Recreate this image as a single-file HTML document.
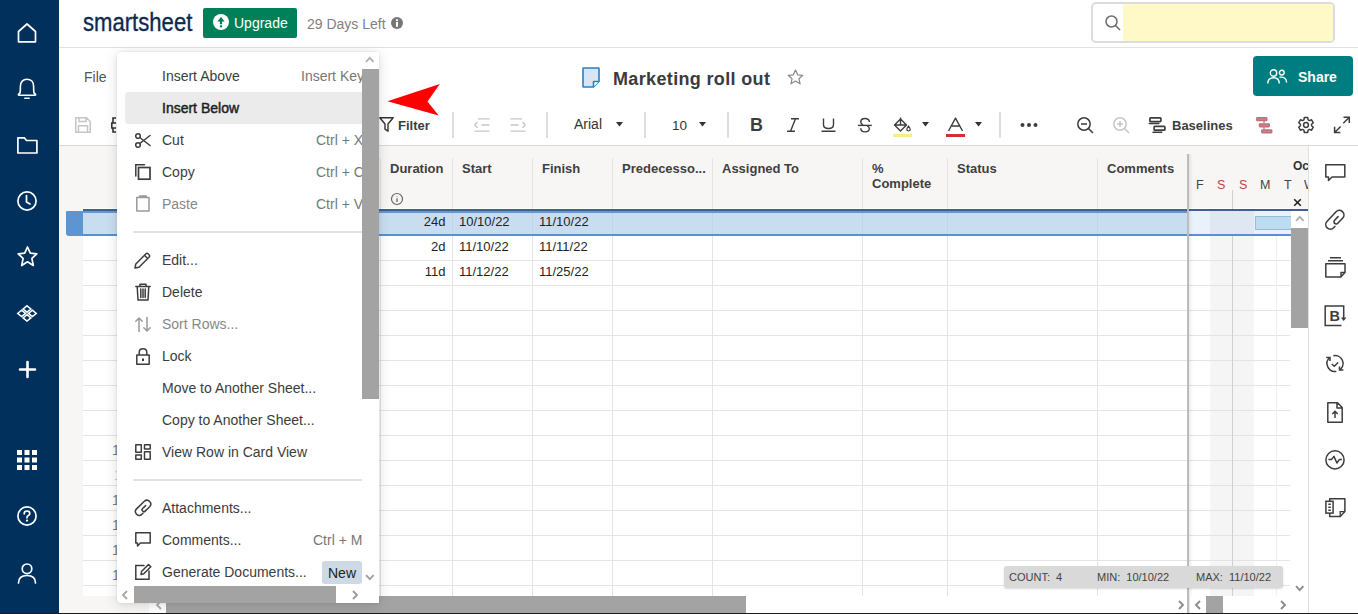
<!DOCTYPE html>
<html><head><meta charset="utf-8">
<style>
*{box-sizing:border-box;margin:0;padding:0}
html,body{width:1358px;height:614px;overflow:hidden;background:#fff;font-family:"Liberation Sans",sans-serif;color:#333}
.a{position:absolute}
svg{position:absolute;overflow:visible}
.t{position:absolute;white-space:nowrap;line-height:1}
.vl{position:absolute;width:1px;background:#e4e4e4}
.hl{position:absolute;height:1px;background:#e4e4e4}
.hd{position:absolute;font-weight:bold;font-size:13px;color:#3f3f3f;line-height:1;white-space:nowrap}
.cell{position:absolute;font-size:13px;color:#1f1f1f;line-height:1;white-space:nowrap}
.mi{position:absolute;left:162px;font-size:14px;color:#3c3c3c;line-height:1;white-space:nowrap}
.sc{position:absolute;left:316px;font-size:14px;color:#777;line-height:1;white-space:nowrap}
.ws{fill:none;stroke:#fff;stroke-width:1.7;stroke-linejoin:round;stroke-linecap:round}
.ic{fill:none;stroke:#3d3d3d;stroke-width:1.5;stroke-linejoin:round;stroke-linecap:round}
.icg{fill:none;stroke:#9a9a9a;stroke-width:1.5;stroke-linejoin:round;stroke-linecap:round}
</style></head><body>

<!-- ===== GRID BACKGROUND ===== -->
<div class="a" style="left:59px;top:146px;width:1249px;height:468px;background:#f7f6f4"></div>
<div class="a" style="left:83px;top:208px;width:1104px;height:388px;background:#fff"></div>
<div class="a" style="left:1189px;top:208px;width:102px;height:388px;background:#fff"></div>
<!-- weekend shade -->
<div class="a" style="left:1210px;top:236px;width:44px;height:360px;background:#f5f5f5"></div>
<!-- row lines -->
<div class="hl" style="left:83px;top:235px;width:1104px"></div>
<div class="hl" style="left:1189px;top:235px;width:101px"></div>
<div class="hl" style="left:83px;top:260px;width:1104px"></div>
<div class="hl" style="left:1189px;top:260px;width:101px"></div>
<div class="hl" style="left:83px;top:285px;width:1104px"></div>
<div class="hl" style="left:1189px;top:285px;width:101px"></div>
<div class="hl" style="left:83px;top:310px;width:1104px"></div>
<div class="hl" style="left:1189px;top:310px;width:101px"></div>
<div class="hl" style="left:83px;top:335px;width:1104px"></div>
<div class="hl" style="left:1189px;top:335px;width:101px"></div>
<div class="hl" style="left:83px;top:360px;width:1104px"></div>
<div class="hl" style="left:1189px;top:360px;width:101px"></div>
<div class="hl" style="left:83px;top:385px;width:1104px"></div>
<div class="hl" style="left:1189px;top:385px;width:101px"></div>
<div class="hl" style="left:83px;top:410px;width:1104px"></div>
<div class="hl" style="left:1189px;top:410px;width:101px"></div>
<div class="hl" style="left:83px;top:435px;width:1104px"></div>
<div class="hl" style="left:1189px;top:435px;width:101px"></div>
<div class="hl" style="left:83px;top:460px;width:1104px"></div>
<div class="hl" style="left:1189px;top:460px;width:101px"></div>
<div class="hl" style="left:83px;top:485px;width:1104px"></div>
<div class="hl" style="left:1189px;top:485px;width:101px"></div>
<div class="hl" style="left:83px;top:510px;width:1104px"></div>
<div class="hl" style="left:1189px;top:510px;width:101px"></div>
<div class="hl" style="left:83px;top:535px;width:1104px"></div>
<div class="hl" style="left:1189px;top:535px;width:101px"></div>
<div class="hl" style="left:83px;top:560px;width:1104px"></div>
<div class="hl" style="left:1189px;top:560px;width:101px"></div>
<div class="hl" style="left:83px;top:585px;width:1104px"></div>
<div class="hl" style="left:1189px;top:585px;width:101px"></div>
<!-- header col separators -->
<div class="vl" style="left:452px;top:158px;height:50px"></div>
<div class="vl" style="left:532px;top:158px;height:50px"></div>
<div class="vl" style="left:612px;top:158px;height:50px"></div>
<div class="vl" style="left:712px;top:158px;height:50px"></div>
<div class="vl" style="left:862px;top:158px;height:50px"></div>
<div class="vl" style="left:947px;top:158px;height:50px"></div>
<div class="vl" style="left:1097px;top:158px;height:50px"></div>
<!-- body col lines -->
<div class="vl" style="left:380px;top:158px;height:438px"></div>
<div class="vl" style="left:452px;top:208px;height:388px"></div>
<div class="vl" style="left:532px;top:208px;height:388px"></div>
<div class="vl" style="left:612px;top:208px;height:388px"></div>
<div class="vl" style="left:712px;top:208px;height:388px"></div>
<div class="vl" style="left:862px;top:208px;height:388px"></div>
<div class="vl" style="left:947px;top:208px;height:388px"></div>
<div class="vl" style="left:1097px;top:208px;height:388px"></div>
<div class="vl" style="left:1232px;top:190px;height:406px;background:#d0d0d0"></div>
<div class="vl" style="left:1276px;top:236px;height:360px;background:#f0f0f0"></div>

<!-- selected row -->
<div class="a" style="left:83px;top:209px;width:1104px;height:27px;background:#c9ddf1;border-top:2px solid #3f6095;border-bottom:2px solid #5a8fd2"></div>
<div class="a" style="left:83px;top:211px;width:1104px;height:2px;background:#6a95ca"></div>
<div class="a" style="left:1189px;top:209px;width:119px;height:27px;background:#e9f1fa;border-top:2px solid #3f6095;border-bottom:2px solid #5a8fd2"></div>
<div class="a" style="left:1210px;top:211px;width:44px;height:23px;background:#dfe8f2"></div>
<div class="a" style="left:1255px;top:216px;width:40px;height:14px;background:#bcdcf2;border:1px solid #9fb9cf"></div>
<div class="a" style="left:66px;top:211px;width:17px;height:25px;background:#5b96d2;border-radius:1px 0 0 3px"></div>

<!-- header text -->
<div class="hd" style="left:390px;top:162px">Duration</div>
<svg style="left:390px;top:192px" width="14" height="14"><circle cx="7" cy="7" r="5.5" fill="none" stroke="#666" stroke-width="1.2"/><path d="M7 4.5v0.5M7 6.3v3.7" stroke="#666" stroke-width="1.3"/></svg>
<div class="hd" style="left:462px;top:162px">Start</div>
<div class="hd" style="left:542px;top:162px">Finish</div>
<div class="hd" style="left:622px;top:162px">Predecesso...</div>
<div class="hd" style="left:722px;top:162px">Assigned To</div>
<div class="hd" style="left:872px;top:162px">%</div>
<div class="hd" style="left:872px;top:177px">Complete</div>
<div class="hd" style="left:957px;top:162px">Status</div>
<div class="hd" style="left:1107px;top:162px">Comments</div>

<!-- gantt header -->
<div class="t" style="left:1293px;top:160px;font-size:12px;font-weight:bold;color:#333">Oct</div>
<div class="t" style="left:1196px;top:179px;font-size:12.5px;color:#444">F</div>
<div class="t" style="left:1217px;top:179px;font-size:12.5px;color:#c0434b">S</div>
<div class="t" style="left:1239px;top:179px;font-size:12.5px;color:#c0434b">S</div>
<div class="t" style="left:1260px;top:179px;font-size:12.5px;color:#444">M</div>
<div class="t" style="left:1284px;top:179px;font-size:12.5px;color:#444">T</div>
<div class="t" style="left:1304px;top:179px;font-size:12.5px;color:#444">W</div>

<!-- cells -->
<div class="cell" style="left:380px;top:215px;width:65.5px;text-align:right">24d</div>
<div class="cell" style="left:459px;top:215px">10/10/22</div>
<div class="cell" style="left:539px;top:215px">11/10/22</div>
<div class="cell" style="left:380px;top:240px;width:65.5px;text-align:right">2d</div>
<div class="cell" style="left:459px;top:240px">11/10/22</div>
<div class="cell" style="left:539px;top:240px">11/11/22</div>
<div class="cell" style="left:380px;top:265px;width:65.5px;text-align:right">11d</div>
<div class="cell" style="left:459px;top:265px">11/12/22</div>
<div class="cell" style="left:539px;top:265px">11/25/22</div>
<!-- row numbers -->
<div class="cell" style="left:112px;top:443px;font-size:14px;color:#7a7a7a">1</div>
<div class="cell" style="left:114px;top:468px;font-size:14px;color:#dccb9a">1</div>
<div class="cell" style="left:112px;top:493px;font-size:14px;color:#7a7a7a">1</div>
<div class="cell" style="left:112px;top:518px;font-size:14px;color:#7a7a7a">1</div>
<div class="cell" style="left:112px;top:543px;font-size:14px;color:#7a7a7a">1</div>
<div class="cell" style="left:112px;top:568px;font-size:14px;color:#7a7a7a">1</div>
<div class="vl" style="left:452px;top:213px;height:21px;background:rgba(0,0,0,0.035)"></div>
<div class="vl" style="left:532px;top:213px;height:21px;background:rgba(0,0,0,0.035)"></div>
<div class="vl" style="left:612px;top:213px;height:21px;background:rgba(0,0,0,0.035)"></div>
<div class="vl" style="left:712px;top:213px;height:21px;background:rgba(0,0,0,0.035)"></div>
<div class="vl" style="left:862px;top:213px;height:21px;background:rgba(0,0,0,0.035)"></div>
<div class="vl" style="left:947px;top:213px;height:21px;background:rgba(0,0,0,0.035)"></div>
<div class="vl" style="left:1097px;top:213px;height:21px;background:rgba(0,0,0,0.035)"></div>

<!-- gantt divider -->
<div class="a" style="left:1187px;top:154px;width:2px;height:460px;background:#bcbcbc"></div><div class="a" style="left:1189px;top:154px;width:4px;height:460px;background:linear-gradient(to right,rgba(0,0,0,0.08),rgba(0,0,0,0.02) 70%,rgba(0,0,0,0))"></div>
<!-- gantt v scrollbar -->
<div class="a" style="left:1291px;top:211px;width:17px;height:385px;background:#fff"></div>
<div class="a" style="left:1291px;top:228px;width:17px;height:100px;background:#a3a3a3"></div>
<svg style="left:1295px;top:215px" width="10" height="7"><path d="M1 5.8 L4.8 1.8 L8.6 5.8" fill="none" stroke="#b0b0b0" stroke-width="1.9"/></svg>
<svg style="left:1295px;top:585px" width="10" height="7"><path d="M1 1.2 L4.7 5.2 L8.4 1.2" fill="none" stroke="#8c8c8c" stroke-width="1.9"/></svg>
<svg style="left:1293px;top:198px" width="9" height="9"><path d="M1.2 1.2L7.8 7.8M7.8 1.2L1.2 7.8" stroke="#222" stroke-width="1.6"/></svg>
<!-- right panel -->
<div class="a" style="left:1308px;top:146px;width:50px;height:468px;background:#fff;border-left:1px solid #e0e0e0"></div>

<!-- bottom scroll area -->
<div class="a" style="left:149px;top:596px;width:1038px;height:17px;background:#fff"></div>
<div class="a" style="left:166px;top:596px;width:580px;height:17px;background:#a3a3a3"></div>
<svg style="left:155px;top:600px" width="8" height="10"><path d="M6 1 L2 5 L6 9" fill="none" stroke="#b0b0b0" stroke-width="1.9"/></svg>
<svg style="left:1177px;top:600px" width="8" height="10"><path d="M2 1 L6 5 L2 9" fill="none" stroke="#8c8c8c" stroke-width="1.9"/></svg>
<div class="a" style="left:1190px;top:596px;width:118px;height:17px;background:#fff"></div>
<div class="a" style="left:1206px;top:596px;width:17px;height:17px;background:#a3a3a3"></div>
<svg style="left:1194px;top:600px" width="8" height="10"><path d="M6 1 L2 5 L6 9" fill="none" stroke="#8c8c8c" stroke-width="1.9"/></svg>
<svg style="left:1279px;top:600px" width="8" height="10"><path d="M2 1 L6 5 L2 9" fill="none" stroke="#8c8c8c" stroke-width="1.9"/></svg>
<div class="a" style="left:0;top:613px;width:1358px;height:1px;background:#1a1a1a"></div>

<!-- count bar -->
<div class="a" style="left:1004px;top:566px;width:279px;height:22px;background:#d9d9d9;border-radius:3px;box-shadow:0 1px 2px rgba(0,0,0,0.15)"></div>
<div class="t" style="left:1009px;top:572px;font-size:11px;color:#444">COUNT:&nbsp; 4</div>
<div class="t" style="left:1097px;top:572px;font-size:11px;color:#444">MIN:&nbsp; 10/10/22</div>
<div class="t" style="left:1196px;top:572px;font-size:11px;color:#444">MAX:&nbsp; 11/10/22</div>

<!-- ===== TOOLBAR ===== -->
<div class="a" style="left:59px;top:47px;width:1299px;height:99px;background:#fff"></div>
<div class="a" style="left:59px;top:145px;width:1299px;height:1px;background:#d9d9d9"></div>

<!-- ===== LEFT NAV ===== -->
<div class="a" style="left:0;top:0;width:59px;height:613px;background:#00305b"></div>

<!-- ===== HEADER ===== -->
<div class="a" style="left:59px;top:0;width:1299px;height:48px;background:#fff;border-bottom:1px solid #e2e2e2"></div>
<div class="t" style="left:83px;top:9px;font-size:26px;color:#0c2a4f;-webkit-text-stroke:0.35px #0c2a4f;transform:scaleX(0.85);transform-origin:0 0">smartsheet</div>
<div class="a" style="left:203px;top:8px;width:94px;height:30px;background:#008059;border-radius:2px"></div>
<svg style="left:213px;top:14px" width="16" height="16"><circle cx="8" cy="8" r="8" fill="#fff"/><path d="M8 2.8 L11.6 7.6 H9.1 V10.3 H6.9 V7.6 H4.4 Z" fill="#008059"/><rect x="6.9" y="11.3" width="2.2" height="2.1" fill="#008059"/></svg>
<div class="t" style="left:234px;top:16px;font-size:14px;color:#fff">Upgrade</div>
<div class="t" style="left:307px;top:17px;font-size:14px;color:#808080">29 Days Left</div>
<svg style="left:391px;top:17px" width="12" height="12"><circle cx="6" cy="6" r="6" fill="#777"/><rect x="5" y="2.3" width="2" height="1.8" fill="#fff"/><rect x="5" y="5" width="2" height="4.8" fill="#fff"/></svg>
<div class="a" style="left:1091px;top:2px;width:244px;height:41px;border:2px solid #dcdcdc;border-radius:5px;background:#fff"></div>
<div class="a" style="left:1123px;top:4px;width:210px;height:37px;background:#fef9c6;border-radius:3px 2px 2px 3px"></div>
<svg style="left:1105px;top:15px" width="16" height="16"><circle cx="6.5" cy="6.5" r="5.5" fill="none" stroke="#6e6e6e" stroke-width="1.5"/><path d="M10.5 10.5 L15 15" stroke="#6e6e6e" stroke-width="1.6"/></svg>

<!-- ===== SECOND BAR ===== -->
<div class="t" style="left:84px;top:70px;font-size:14px;color:#555">File</div>
<svg style="left:582px;top:67px" width="18" height="21"><path d="M1 1.5 Q1 1 1.5 1 H16.5 Q17 1 17 1.5 V14.5 L11.5 20 H1.5 Q1 20 1 19.5 Z" fill="#d6e6f8" stroke="#2a7fc4" stroke-width="1.6"/><path d="M17 14.5 H12 Q11.5 14.5 11.5 15 V20" fill="#fff" stroke="#2a7fc4" stroke-width="1.6"/></svg>
<div class="t" style="left:613px;top:69.5px;font-size:18px;font-weight:bold;color:#3b3b3b;letter-spacing:0.35px">Marketing roll out</div>
<svg style="left:787px;top:69px" width="17" height="16"><path d="M8.5 1 L10.7 5.8 L15.8 6.3 L11.9 9.7 L13.1 14.8 L8.5 12.1 L3.9 14.8 L5.1 9.7 L1.2 6.3 L6.3 5.8 Z" fill="none" stroke="#888" stroke-width="1.2" stroke-linejoin="round"/></svg>
<div class="a" style="left:1253px;top:56px;width:100px;height:40px;background:#007d80;border-radius:4px"></div>
<svg style="left:1267px;top:69px" width="21" height="15"><circle cx="6.5" cy="4" r="3.2" fill="none" stroke="#fff" stroke-width="1.4"/><circle cx="14.8" cy="3.6" r="2.4" fill="none" stroke="#fff" stroke-width="1.4"/><path d="M0.8 14.5 Q0.8 8.8 6.5 8.8 Q12.2 8.8 12.2 14.5" fill="none" stroke="#fff" stroke-width="1.4"/><path d="M12.5 8.2 Q19.6 7.6 19.6 13.5" fill="none" stroke="#fff" stroke-width="1.4"/></svg>
<div class="t" style="left:1298px;top:70px;font-size:14px;font-weight:bold;color:#fff">Share</div>

<!-- ===== TOOLBAR ICONS ===== -->
<svg style="left:75px;top:117px" width="16" height="16"><path d="M0.75 0.75 H11.5 L15.25 4.5 V15.25 H0.75 Z M4 0.75 V4.5 H11 V0.75 M3.5 15.25 V8.8 H12.5 V15.25" fill="none" stroke="#c6c6c6" stroke-width="1.5"/></svg>
<svg style="left:111px;top:117px" width="12" height="16"><path d="M5 1 H2 V6 H0.8 V11 H2 V15 H5 M2 6 H5 M2 11 H5" fill="none" stroke="#333" stroke-width="1.6"/></svg>
<svg style="left:379px;top:117px" width="15" height="15"><path d="M0.8 0.8 H14.2 L9 7 V14.2 L6 12.2 V7 Z" fill="none" stroke="#333" stroke-width="1.4" stroke-linejoin="round"/></svg>
<div class="t" style="left:398px;top:119px;font-size:13px;font-weight:bold;color:#3d3d3d">Filter</div>
<div class="a" style="left:452px;top:112px;width:2px;height:26px;background:#dedede"></div>
<svg style="left:474px;top:118px" width="16" height="14"><path d="M4 0.8 H15.5 M7.5 7 H15.5 M0.5 13.2 H15.5 M3.5 4 L0.8 7 L3.5 10" fill="none" stroke="#c6c6c6" stroke-width="1.3"/></svg>
<svg style="left:510px;top:118px" width="16" height="14"><path d="M0.5 0.8 H12 M0.5 7 H8.5 M0.5 13.2 H15.5 M12.5 4 L15.2 7 L12.5 10" fill="none" stroke="#c6c6c6" stroke-width="1.3"/></svg>
<div class="a" style="left:546px;top:112px;width:2px;height:26px;background:#dedede"></div>
<div class="t" style="left:574px;top:117px;font-size:14px;color:#333">Arial</div>
<svg style="left:616px;top:122px" width="7" height="5"><path d="M0 0 H7 L3.5 4.5 Z" fill="#333"/></svg>
<div class="a" style="left:644px;top:112px;width:2px;height:26px;background:#dedede"></div>
<div class="t" style="left:672px;top:118.5px;font-size:13.5px;color:#333">10</div>
<svg style="left:699px;top:122px" width="7" height="5"><path d="M0 0 H7 L3.5 4.5 Z" fill="#333"/></svg>
<div class="a" style="left:727px;top:112px;width:2px;height:26px;background:#dedede"></div>
<div class="t" style="left:750px;top:116px;font-size:18px;font-weight:bold;color:#3d3d3d">B</div>
<svg style="left:786px;top:118px" width="14" height="14"><path d="M5 0.8 H13 M1 13.2 H9 M9.5 0.8 L4.5 13.2" fill="none" stroke="#3d3d3d" stroke-width="1.4"/></svg>
<svg style="left:821px;top:118px" width="15" height="14"><path d="M2.5 0.5 V6.5 Q2.5 10.5 7.5 10.5 Q12.5 10.5 12.5 6.5 V0.5 M0.5 13.2 H14.5" fill="none" stroke="#3d3d3d" stroke-width="1.4"/></svg>
<svg style="left:857px;top:117px" width="16" height="16"><path d="M12.4 5 Q12 1.5 8 1.5 Q3.8 1.5 3.8 5 Q3.8 7 6 8 M10 8.6 Q12.3 9.6 12.3 11.5 Q12.3 14.9 8 14.9 Q3.8 14.9 3.8 11.2" fill="none" stroke="#3d3d3d" stroke-width="1.4"/><path d="M0.9 8.4 H14.8" stroke="#3d3d3d" stroke-width="1.4"/></svg>
<svg style="left:893px;top:117px" width="19" height="20"><path d="M1.5 8 L7.5 2 L13.5 8 L7.5 14 Z M7.5 0.5 V8 M1.5 8 H13.5" fill="none" stroke="#3d3d3d" stroke-width="1.4" stroke-linejoin="round"/><path d="M15.5 9 Q13.8 11.5 13.8 12.3 A1.7 1.7 0 0 0 17.2 12.3 Q17.2 11.5 15.5 9 Z" fill="none" stroke="#3d3d3d" stroke-width="1.2"/><rect x="0" y="17" width="19" height="3" fill="#f6ee8e"/></svg>
<svg style="left:922px;top:122px" width="7" height="5"><path d="M0 0 H7 L3.5 4.5 Z" fill="#333"/></svg>
<svg style="left:946px;top:117px" width="19" height="20"><path d="M2.5 14 L9.5 1.2 L16.5 14 M5.5 9 H13.5" fill="none" stroke="#3d3d3d" stroke-width="1.4" stroke-linejoin="round"/><rect x="0" y="17" width="19" height="3" fill="#d42f2f"/></svg>
<svg style="left:975px;top:122px" width="7" height="5"><path d="M0 0 H7 L3.5 4.5 Z" fill="#333"/></svg>
<div class="a" style="left:999px;top:112px;width:2px;height:26px;background:#dedede"></div>
<svg style="left:1020px;top:122px" width="18" height="6"><circle cx="2.5" cy="3" r="2" fill="#3d3d3d"/><circle cx="9" cy="3" r="2" fill="#3d3d3d"/><circle cx="15.5" cy="3" r="2" fill="#3d3d3d"/></svg>
<svg style="left:1077px;top:117px" width="17" height="17"><circle cx="7" cy="7" r="6.2" fill="none" stroke="#3d3d3d" stroke-width="1.5"/><path d="M4 7 H10 M11.5 11.5 L16 16" fill="none" stroke="#3d3d3d" stroke-width="1.5"/></svg>
<svg style="left:1113px;top:117px" width="17" height="17"><circle cx="7" cy="7" r="6.2" fill="none" stroke="#c6c6c6" stroke-width="1.5"/><path d="M4 7 H10 M7 4 V10 M11.5 11.5 L16 16" fill="none" stroke="#c6c6c6" stroke-width="1.5"/></svg>
<svg style="left:1148px;top:116px" width="18" height="18"><rect x="1.9" y="1.8" width="11" height="3.8" rx="0.8" fill="none" stroke="#3d3d3d" stroke-width="1.7"/><path d="M1.3 7.6 H10.8" stroke="#3d3d3d" stroke-width="1.5" stroke-linecap="round"/><rect x="6.1" y="10.4" width="10.8" height="3.8" rx="0.8" fill="none" stroke="#3d3d3d" stroke-width="1.7"/><path d="M5 16.3 H13.8" stroke="#3d3d3d" stroke-width="1.5" stroke-linecap="round"/></svg>
<div class="t" style="left:1172px;top:119px;font-size:13px;font-weight:bold;color:#3d3d3d">Baselines</div>
<svg style="left:1255px;top:116px" width="18" height="18"><g fill="#b98c92" stroke="#c46e79" stroke-width="1.5"><rect x="1.8" y="1.8" width="10" height="2.8" rx="0.6"/><rect x="4.5" y="7.9" width="9.8" height="2.8" rx="0.6"/><rect x="6.8" y="13.9" width="9.9" height="2.8" rx="0.6"/></g><path d="M9 4.8 V7.6 M9 10.9 V13.7" stroke="#d8828c" stroke-width="1.5"/></svg>
<svg style="left:1297px;top:116px" width="18" height="18"><path d="M6.90 3.81 L7.29 1.59 L10.71 1.59 L11.10 3.81 L12.45 4.59 L14.56 3.82 L16.27 6.78 L14.55 8.22 L14.55 9.78 L16.27 11.22 L14.56 14.18 L12.45 13.41 L11.10 14.19 L10.71 16.41 L7.29 16.41 L6.90 14.19 L5.55 13.41 L3.44 14.18 L1.73 11.22 L3.45 9.78 L3.45 8.22 L1.73 6.78 L3.44 3.82 L5.55 4.59 Z" fill="none" stroke="#3d3d3d" stroke-width="1.5" stroke-linejoin="round"/><circle cx="9" cy="9" r="2.4" fill="none" stroke="#3d3d3d" stroke-width="1.5"/></svg>
<svg style="left:1333px;top:116px" width="18" height="18"><path d="M10.5 1.3 H16.3 V7 M16.3 1.3 L10.3 7.3 M1.6 10.8 V16.5 H7.3 M1.6 16.5 L7.6 10.5" fill="none" stroke="#3d3d3d" stroke-width="1.5"/></svg>

<!-- ===== RIGHT PANEL ICONS ===== -->
<svg style="left:1325px;top:164px" width="21" height="18"><path d="M0.8 0.8 H19.8 V13 H7 L3.5 16.5 V13 H0.8 Z" fill="none" stroke="#3d3d3d" stroke-width="1.5" stroke-linejoin="round"/></svg>
<svg style="left:1324px;top:208px" width="22" height="23"><path d="M10.89 18.43 L9.65 19.75 A4.60 4.60 0 0 1 2.95 13.45 L12.05 3.75 A4.60 4.60 0 0 1 18.75 10.05 L13.83 15.30 A2.20 2.20 0 0 1 10.62 12.29 L14.04 8.64" fill="none" stroke="#3d3d3d" stroke-width="1.6" stroke-linecap="round"/></svg>
<svg style="left:1325px;top:257px" width="21" height="21"><path d="M5 0.8 H16 M3 3.8 H18 M0.8 6.8 H20 V15.5 L15.8 20 H0.8 Z M20 15.5 H16 V20" fill="none" stroke="#3d3d3d" stroke-width="1.5" stroke-linejoin="round"/></svg>
<svg style="left:1324px;top:305px" width="23" height="22"><path d="M17.5 20.4 H1.2 V0.9 H19.7 V13.5" fill="none" stroke="#3d3d3d" stroke-width="1.5"/><path d="M16.9 12.4 H22.4 L19.65 16 Z" fill="#3d3d3d"/><text x="5.6" y="15.8" font-family="Liberation Sans" font-weight="bold" font-size="14.5" fill="#3d3d3d">B</text></svg>
<svg style="left:1322px;top:350px" width="26" height="26"><path d="M14.39 21.38 A8 8 0 0 1 7.75 7.46 M11.39 5.66 A8 8 0 0 1 17.86 19.86" fill="none" stroke="#3d3d3d" stroke-width="1.5"/><path d="M4.2 7.5 H8 V11 M17.5 16.4 V20.1 H21.4" fill="none" stroke="#3d3d3d" stroke-width="1.5"/><path d="M9.8 14 L12.3 16.3 L16.1 12.4" fill="none" stroke="#3d3d3d" stroke-width="1.5"/></svg>
<svg style="left:1327px;top:402px" width="16" height="21"><path d="M0.8 0.8 H10.5 L15.2 5.5 V20.2 H0.8 Z M10 0.8 V6 H15.2" fill="none" stroke="#3d3d3d" stroke-width="1.5" stroke-linejoin="round"/><path d="M8 16 V9.5 M5.3 12 L8 9.3 L10.7 12" fill="none" stroke="#3d3d3d" stroke-width="1.5"/></svg>
<svg style="left:1325px;top:450px" width="21" height="21"><circle cx="10" cy="9.9" r="9.1" fill="none" stroke="#3d3d3d" stroke-width="1.5"/><path d="M3.4 9.6 H6.4 L8.9 6.4 L11.9 13 L14.3 9.6 H16.9" fill="none" stroke="#3d3d3d" stroke-width="1.5" stroke-linejoin="round"/></svg>
<svg style="left:1325px;top:497px" width="21" height="21"><path d="M4.7 1.7 H19.9 V14.6 L15.2 19.4 H4.7 Z" fill="#fff" stroke="#3d3d3d" stroke-width="1.5" stroke-linejoin="round"/><path d="M19.9 14.6 H15.2 V19.4" fill="none" stroke="#3d3d3d" stroke-width="1.3"/><rect x="0.9" y="4.3" width="7.2" height="11.8" fill="#fff" stroke="#3d3d3d" stroke-width="1.5"/><path d="M3.3 7.2 H5.8 M3.3 10.2 H5.8 M3.3 13.2 H5.8" stroke="#3d3d3d" stroke-width="1.4"/></svg>

<!-- ===== LEFT NAV ICONS ===== -->
<svg style="left:17px;top:23px" width="20" height="20"><path d="M1.5 8.5 L10 1 L18.5 8.5 V18.8 H1.5 Z" class="ws"/></svg>
<svg style="left:17px;top:78px" width="20" height="22"><path d="M3.1 14.8 C3.3 12.5 3.4 10.5 3.4 8.2 C3.4 4 6 1.3 10 1.3 C14 1.3 16.6 4 16.6 8.2 C16.6 10.5 16.7 12.5 16.9 14.8 L18.4 16.2 Q19 17.2 18 17.2 H2 Q1 17.2 1.6 16.2 Z" class="ws" style="stroke-width:1.6"/><path d="M7.8 20.3 H12.2" stroke="#fff" stroke-width="1.6" stroke-linecap="round"/></svg>
<svg style="left:17px;top:137px" width="21" height="17"><path d="M0.9 0.9 H7.5 L9.5 3.5 H19.9 V16 H0.9 Z" class="ws"/></svg>
<svg style="left:17px;top:191px" width="20" height="20"><circle cx="10" cy="10" r="9.1" class="ws"/><path d="M9.5 4.5 V11 L13 13" class="ws"/></svg>
<svg style="left:17px;top:246px" width="21" height="21"><path d="M10.5 1 L13.3 7.2 L19.8 7.8 L14.9 12.3 L16.3 19.5 L10.5 15.8 L4.7 19.5 L6.1 12.3 L1.2 7.8 L7.7 7.2 Z" class="ws"/></svg>
<svg style="left:17px;top:305px" width="21" height="18"><path d="M10.0 0.8 L13.9 4.0 L10.0 7.2 L6.1 4.0 Z M4.6 5.2 L8.5 8.4 L4.6 11.6 L0.7 8.4 Z M15.4 5.2 L19.3 8.4 L15.4 11.6 L11.5 8.4 Z M10.0 9.7 L13.9 12.9 L10.0 16.1 L6.1 12.9 Z" fill="none" stroke="#fff" stroke-width="1.5" stroke-linejoin="miter"/></svg>
<svg style="left:19px;top:361px" width="17" height="17"><path d="M8.5 1 V16 M1 8.5 H16" stroke="#fff" stroke-width="2.6" stroke-linecap="round"/></svg>
<svg style="left:17px;top:450px" width="20" height="20"><g fill="#fff"><rect x="0" y="0" width="5" height="5"/><rect x="7.5" y="0" width="5" height="5"/><rect x="15" y="0" width="5" height="5"/><rect x="0" y="7.5" width="5" height="5"/><rect x="7.5" y="7.5" width="5" height="5"/><rect x="15" y="7.5" width="5" height="5"/><rect x="0" y="15" width="5" height="5"/><rect x="7.5" y="15" width="5" height="5"/><rect x="15" y="15" width="5" height="5"/></g></svg>
<svg style="left:17px;top:506px" width="20" height="20"><circle cx="10" cy="10" r="9.1" class="ws"/><path d="M7.2 7.8 Q7.2 5 10 5 Q12.8 5 12.8 7.5 Q12.8 9 11 9.8 Q10 10.3 10 11.8" class="ws"/><circle cx="10" cy="14.6" r="1.1" fill="#fff"/></svg>
<svg style="left:17px;top:563px" width="20" height="21"><circle cx="10" cy="5.8" r="4.8" class="ws"/><path d="M1.5 20 Q1.5 12.5 10 12.5 Q18.5 12.5 18.5 20" class="ws"/></svg>

<!-- ===== CONTEXT MENU ===== -->
<div class="a" style="left:117px;top:52px;width:262px;height:551px;background:#fff;border-radius:4px 0 0 4px;box-shadow:0 2px 14px rgba(0,0,0,0.13),0 0 3px rgba(0,0,0,0.1)"></div>
<div class="a" style="left:125px;top:92px;width:240px;height:32px;background:#ebebeb;border-radius:4px 0 0 4px"></div>
<div class="a" style="left:362px;top:69px;width:17px;height:330px;background:#a3a3a3"></div>
<svg style="left:365px;top:56px" width="10" height="7"><path d="M1 5.8 L4.8 1.8 L8.6 5.8" fill="none" stroke="#b0b0b0" stroke-width="1.9"/></svg>
<svg style="left:365px;top:574px" width="10" height="7"><path d="M1 1.2 L4.8 5.2 L8.6 1.2" fill="none" stroke="#a0a0a0" stroke-width="1.9"/></svg>
<div class="a" style="left:134px;top:586px;width:202px;height:17px;background:#a3a3a3"></div>
<svg style="left:121px;top:590px" width="8" height="10"><path d="M6 1 L2 5 L6 9" fill="none" stroke="#aaa" stroke-width="1.9"/></svg>
<svg style="left:351px;top:590px" width="8" height="10"><path d="M2 1 L6 5 L2 9" fill="none" stroke="#9a9a9a" stroke-width="1.9"/></svg>

<div class="mi" style="top:69px">Insert Above</div><div class="sc" style="left:301px;top:69px;width:61px;overflow:hidden">Insert Key</div>
<div class="mi" style="top:101px;font-size:14px;color:#1e1e1e;-webkit-text-stroke:0.45px #1e1e1e">Insert Below</div>
<div class="mi" style="top:133px">Cut</div><div class="sc" style="top:133px;width:46px;overflow:hidden">Ctrl + X</div>
<div class="mi" style="top:165px">Copy</div><div class="sc" style="top:165px;width:46px;overflow:hidden">Ctrl + C</div>
<div class="mi" style="top:197px;color:#888">Paste</div><div class="sc" style="top:197px;width:46px;overflow:hidden">Ctrl + V</div>
<div class="a" style="left:133px;top:231px;width:229px;height:2px;background:#e2e2e2"></div>
<div class="mi" style="top:253px">Edit...</div>
<div class="mi" style="top:285px">Delete</div>
<div class="mi" style="top:317px;color:#888">Sort Rows...</div>
<div class="mi" style="top:349px">Lock</div>
<div class="mi" style="top:381px">Move to Another Sheet...</div>
<div class="mi" style="top:413px">Copy to Another Sheet...</div>
<div class="mi" style="top:445px">View Row in Card View</div>
<div class="a" style="left:133px;top:479px;width:229px;height:2px;background:#e2e2e2"></div>
<div class="mi" style="top:501px">Attachments...</div>
<div class="mi" style="top:533px">Comments...</div><div class="sc" style="left:313px;top:533px">Ctrl + M</div>
<div class="mi" style="top:565px">Generate Documents...</div>
<div class="a" style="left:322px;top:561px;width:40px;height:23px;background:#cdd9e5;border-radius:3px"></div>
<div class="t" style="left:328px;top:566px;font-size:14px;color:#222">New</div>

<!-- menu icons -->
<svg style="left:135px;top:133px" width="16" height="15"><circle cx="3" cy="3" r="2.3" class="ic"/><circle cx="3" cy="12" r="2.3" class="ic"/><path d="M4.8 4.5 L15 12.5 M4.8 10.5 L15 2.5" class="ic"/></svg>
<svg style="left:135px;top:164px" width="16" height="16"><path d="M0.8 12 V0.8 H9.5" class="ic" style="stroke-linejoin:miter"/><rect x="3.5" y="3.5" width="11.5" height="11.7" class="ic" style="stroke-width:1.7;stroke-linejoin:miter"/></svg>
<svg style="left:136px;top:195px" width="14" height="17"><path d="M0.8 2.5 H13 V16 H0.8 Z M3.5 2.5 V1 H10.3 V2.5" class="icg"/></svg>
<svg style="left:134px;top:252px" width="17" height="17"><path d="M1 16 L1.8 12 L12 1.8 Q13 0.8 14 1.8 L15.2 3 Q16.2 4 15.2 5 L5 15.2 Z M10.5 3.3 L13.7 6.5" class="ic"/></svg>
<svg style="left:135px;top:283px" width="16" height="18"><path d="M0.8 3.5 H15.2 M5 3.5 V1.3 H11 V3.5 M2.2 3.5 L3 17 H13 L13.8 3.5 M5.8 6 V14.5 M8 6 V14.5 M10.2 6 V14.5" class="ic"/></svg>
<svg style="left:135px;top:317px" width="16" height="15"><path d="M4 14.5 V1 M0.8 4.2 L4 1 L7.2 4.2 M12 0.5 V14 M8.8 10.8 L12 14 L15.2 10.8" class="icg"/></svg>
<svg style="left:136px;top:348px" width="14" height="17"><path d="M0.8 7 H13.2 V16.2 H0.8 Z M3.2 7 V4.5 Q3.2 0.8 7 0.8 Q10.8 0.8 10.8 4.5 V7" class="ic"/><path d="M7 10.5 V13" stroke="#3d3d3d" stroke-width="2"/></svg>
<svg style="left:135px;top:444px" width="16" height="16"><rect x="0.8" y="0.8" width="5.5" height="7.5" class="ic"/><rect x="0.8" y="11" width="5.5" height="4.2" class="ic"/><rect x="9.5" y="0.8" width="5.7" height="4.2" class="ic"/><rect x="9.5" y="7.7" width="5.7" height="7.5" class="ic"/></svg>
<svg style="left:134px;top:498px" width="18" height="19"><path d="M8.93 15.27 L7.85 16.32 A3.80 3.80 0 0 1 2.55 10.88 L10.35 3.28 A3.80 3.80 0 0 1 15.65 8.72 L11.14 13.12 A1.80 1.80 0 0 1 8.63 10.54 L11.64 7.61" fill="none" stroke="#3d3d3d" stroke-width="1.5" stroke-linecap="round"/></svg>
<svg style="left:135px;top:532px" width="16" height="16"><path d="M0.8 0.8 H15.2 V11 H5.5 L2.5 14 V11 H0.8 Z" class="ic"/></svg>
<svg style="left:135px;top:563px" width="17" height="17"><path d="M9 2.5 H0.8 V16.2 H14 V8" class="ic" style="stroke-linejoin:miter"/><path d="M6 11.5 L6.5 8.5 L13.5 1.5 L15.8 3.8 L8.8 10.8 Z" class="ic"/></svg>

<!-- red arrow -->
<svg style="left:0;top:0" width="1358" height="614"><path d="M387.4 101.2 L439.8 84.1 L427.5 101.6 L438.7 115.5 Z" fill="#ff0000"/></svg>

</body></html>
